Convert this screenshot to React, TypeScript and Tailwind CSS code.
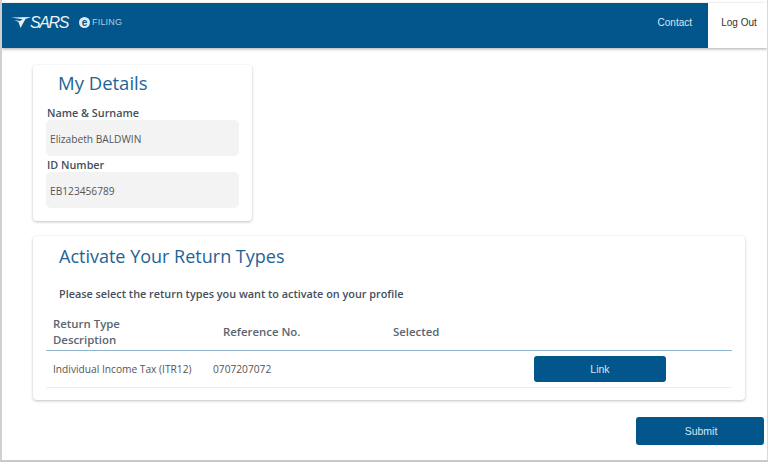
function SarsLogo() {
  return (
    <div className="flex items-center">
      <svg width="20" height="13" viewBox="0 0 20 13" className="shrink-0">
        <path d="M0 1.5 L20 1 L14.5 3 L9.5 12 L7.5 6 L3.5 4 L9 5 L11.5 3.2 Z" fill="#e6eef4" />
      </svg>
      <span className="-ml-[1px] font-['Liberation_Sans',sans-serif] italic text-[16px] leading-none tracking-[-1.4px] text-[#eef3f7]">
        SARS
      </span>
      <span className="ml-[11px] flex h-[11px] w-[11px] items-center justify-center rounded-full bg-[#dfe9f0] font-['Liberation_Sans',sans-serif] text-[10px] font-bold leading-none text-[#02568b]">
        e
      </span>
      <span className="ml-[2px] font-['Liberation_Sans',sans-serif] text-[9px] leading-none tracking-[0.2px] text-[#b5cbdb]">
        FILING
      </span>
    </div>
  );
}

function DetailField({ label, value }: { label: string; value: string }) {
  return (
    <div>
      <div className="h-[16px] pl-[1px] pt-[1px] text-[10.8px] font-semibold leading-[16px] text-[#44505c]">{label}</div>
      <div className="flex h-[36px] items-center rounded-[5px] bg-[#f3f3f3] pl-[4px] pt-[3px] text-[10.2px] text-[#555]">
        {value}
      </div>
    </div>
  );
}

export default function App() {
  return (
    <div className="flex h-[462px] w-[768px] flex-col overflow-hidden border-b-2 border-l-2 border-r border-b-[#c8c8c8] border-l-[#d0d0d0] border-r-[#d8d8d8] bg-white pt-[3px] font-['Open_Sans',sans-serif]">
      <header className="flex h-[45px] shrink-0 items-center justify-between bg-[#02568b] pl-[9px] shadow-[0_1px_3px_rgba(0,0,0,0.35)]">
        <div className="pb-[6px]">
          <SarsLogo />
        </div>
        <nav className="flex h-full items-center font-['Liberation_Sans',sans-serif] text-[10px]">
          <span className="mr-[16px] pb-[6px] text-[#dbe7f0]">Contact</span>
          <span className="flex h-full w-[59px] items-center justify-center bg-white pb-[6px] pl-[3px] text-[#333]">
            Log Out
          </span>
        </nav>
      </header>

      <main className="flex min-h-0 flex-1 flex-col pl-[31px] pt-[17px]">
        <section className="h-[156px] w-[219px] rounded-[4px] bg-white px-[13px] pt-[4px] shadow-[0_1px_3px_rgba(0,0,0,0.25)]">
          <h2 className="mb-[8px] pl-[12px] text-[18.5px] leading-[27px] text-[#1f6496]">My Details</h2>
          <DetailField label="Name & Surname" value="Elizabeth BALDWIN" />
          <DetailField label="ID Number" value="EB123456789" />
        </section>

        <section className="mt-[15px] h-[164px] w-[712px] rounded-[4px] bg-white px-[13px] pt-[7px] shadow-[0_1px_3px_rgba(0,0,0,0.25)]">
          <h2 className="pl-[13px] text-[18px] leading-[27px] text-[#1f6496]">Activate Your Return Types</h2>
          <p className="mt-[16px] pl-[13px] text-[10.85px] font-semibold leading-[16px] text-[#44505c]">
            Please select the return types you want to activate on your profile
          </p>
          <div className="mt-[12px] flex h-[37px] items-center border-b border-[#8fb3cd] text-[11.4px] font-semibold text-[#5a6570]">
            <div className="w-[177px] pl-[7px] leading-[16px]">
              Return Type
              <br />
              Description
            </div>
            <div className="w-[170px]">Reference No.</div>
            <div>Selected</div>
          </div>
          <div className="flex h-[37px] items-center border-b border-[#eeeeee] text-[10.2px] text-[#555]">
            <div className="w-[167px] pl-[7px] pt-[1px]">Individual Income Tax (ITR12)</div>
            <div className="w-[321px] pt-[1px]">0707207072</div>
            <button className="h-[26px] w-[132px] rounded-[3px] bg-[#02568b] pt-[1px] font-['Liberation_Sans',sans-serif] text-[10.5px] text-[#dbe7f0]">
              Link
            </button>
          </div>
        </section>

        <div className="mt-[17px] flex justify-end pr-[3px]">
          <button className="h-[28px] w-[128px] rounded-[3px] bg-[#02568b] pl-[2px] pt-[1px] font-['Liberation_Sans',sans-serif] text-[10.5px] text-[#dbe7f0]">
            Submit
          </button>
        </div>
      </main>
    </div>
  );
}
